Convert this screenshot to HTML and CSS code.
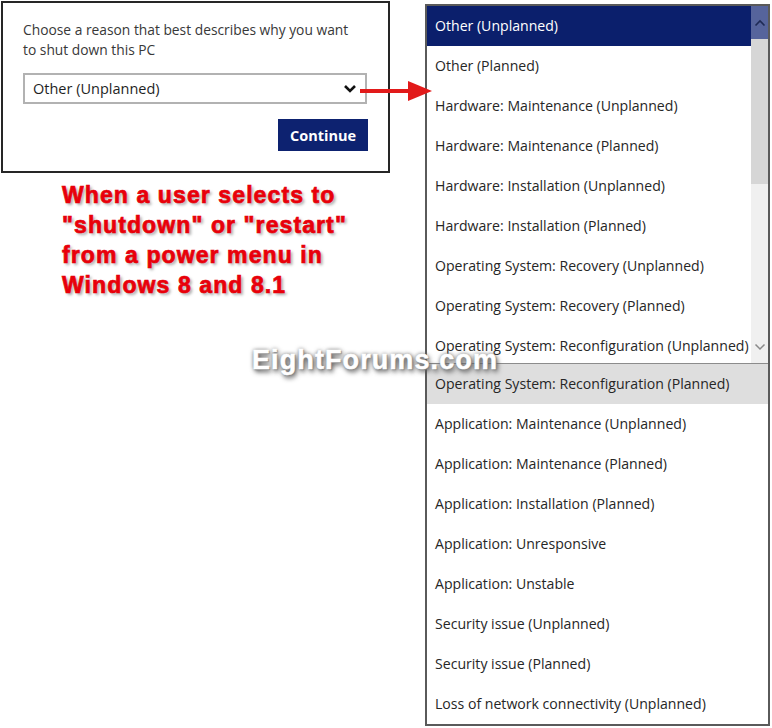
FILE: index.html
```html
<!DOCTYPE html>
<html>
<head>
<meta charset="utf-8">
<link rel="stylesheet" href="styles.css">
</head>
<body>
<div class="page">
  <div class="left">
    <div class="dialog">
      <p class="prompt">Choose a reason that best describes why you want to shut down this PC</p>
      <div class="select">
        <span>Other (Unplanned)</span>
        <svg class="chev" width="14" height="10" viewBox="0 0 14 10"><path d="M2 2 L7 7 L12 2" fill="none" stroke="#111" stroke-width="2.6"/></svg>
      </div>
      <div class="actions"><button class="btn">Continue</button></div>
    </div>
    <div class="note">When a user selects to<br>"shutdown" or "restart"<br>from a power menu in<br>Windows 8 and 8.1</div>
  </div>
  <div class="list">
    <div class="top">
      <div class="items">
        <div class="row sel">Other (Unplanned)</div>
        <div class="row">Other (Planned)</div>
        <div class="row">Hardware: Maintenance (Unplanned)</div>
        <div class="row">Hardware: Maintenance (Planned)</div>
        <div class="row">Hardware: Installation (Unplanned)</div>
        <div class="row">Hardware: Installation (Planned)</div>
        <div class="row">Operating System: Recovery (Unplanned)</div>
        <div class="row">Operating System: Recovery (Planned)</div>
        <div class="row">Operating System: Reconfiguration (Unplanned)</div>
      </div>
      <div class="scroll">
        <div class="sb-up"><svg width="12" height="8" viewBox="0 0 12 8"><path d="M1.5 6.5 L6 2 L10.5 6.5" fill="none" stroke="#1e2a55" stroke-width="1.6"/></svg></div>
        <div class="sb-thumb"></div>
        <div class="sb-track"><svg width="12" height="8" viewBox="0 0 12 8"><path d="M1.5 1.5 L6 6 L10.5 1.5" fill="none" stroke="#8a8a8a" stroke-width="1.5"/></svg></div>
      </div>
    </div>
    <div class="bottom">
      <div class="row hov">Operating System: Reconfiguration (Planned)</div>
      <div class="row">Application: Maintenance (Unplanned)</div>
      <div class="row">Application: Maintenance (Planned)</div>
      <div class="row">Application: Installation (Planned)</div>
      <div class="row">Application: Unresponsive</div>
      <div class="row">Application: Unstable</div>
      <div class="row">Security issue (Unplanned)</div>
      <div class="row">Security issue (Planned)</div>
      <div class="row">Loss of network connectivity (Unplanned)</div>
    </div>
  </div>
</div>
<svg class="arrow" width="80" height="26" viewBox="0 0 80 26"><g fill="#e21a1a"><rect x="2" y="9" width="52" height="4"/><polygon points="50,1 74,11 50,21"/></g></svg>
<div class="watermark">EightForums.com</div>
</body>
</html>
```

FILE: styles.css
```css
html, body {
  margin: 0;
  padding: 0;
  background: #fff;
}
body {
  width: 772px;
  height: 728px;
  overflow: hidden;
  position: relative;
  font-family: "Open Sans", "Noto Sans", sans-serif;
}
.page {
  display: flex;
  padding: 1px 0 0 1px;
}
.left {
  width: 389px;
  flex: none;
}
.dialog {
  box-sizing: border-box;
  width: 389px;
  height: 172px;
  border: 2px solid #262626;
  padding: 17px 20px 0 20px;
}
.prompt {
  margin: 0;
  font-size: 13.8px;
  line-height: 20px;
  color: #383838;
  width: 340px;
}
.select {
  box-sizing: border-box;
  margin-top: 13px;
  width: 344px;
  height: 31px;
  border: 2px solid #b2b2b2;
  display: flex;
  align-items: center;
  justify-content: space-between;
  padding: 0 8px 0 8px;
  font-size: 14.5px;
  color: #1f1f1f;
}
.chev { display: block; }
.actions {
  width: 345px;
  display: flex;
  justify-content: flex-end;
  margin-top: 15px;
}
.btn {
  width: 90px;
  height: 32px;
  border: 0;
  background: #0d2270;
  color: #fff;
  font-family: "Open Sans", "Noto Sans", sans-serif;
  font-weight: 700;
  font-size: 14.5px;
  padding: 0;
}
.note {
  margin-top: 7px;
  padding-left: 61px;
  font-family: "Liberation Sans", Arial, sans-serif;
  font-weight: 700;
  font-size: 23px;
  line-height: 30px;
  letter-spacing: 1.1px;
  color: #e8000a;
  -webkit-text-stroke: 0.7px #e8000a;
  text-shadow: 2px 2px 3px rgba(0,0,0,0.35);
  white-space: nowrap;
}
.list {
  margin-left: 35px;
  margin-top: 3px;
  width: 345px;
  height: 722px;
  box-sizing: border-box;
  border: 2px solid #5a5a5a;
  display: flex;
  flex-direction: column;
}
.top {
  height: 357px;
  display: flex;
  overflow: hidden;
  border-bottom: 1px solid #8c8c8c;
}
.items {
  width: 324px;
  flex: none;
}
.row {
  height: 40px;
  line-height: 40px;
  padding-left: 8px;
  font-size: 14.1px;
  color: #262626;
  white-space: nowrap;
}
.row.sel {
  background: #0b1f6c;
  color: #fff;
}
.row.hov {
  background: #dedede;
}
.scroll {
  width: 17px;
  flex: none;
  display: flex;
  flex-direction: column;
}
.sb-up {
  height: 33px;
  background: #56649c;
  display: flex;
  align-items: center;
  justify-content: center;
}
.sb-thumb {
  height: 145px;
  background: #d6d6d6;
}
.sb-track {
  flex: 1;
  background: #f0f0f0;
  display: flex;
  align-items: flex-end;
  justify-content: center;
  padding-bottom: 12px;
}
.sb-track svg { display: block; }
.bottom {
  flex: 1;
}
.arrow {
  position: absolute;
  left: 358px;
  top: 80px;
}
.watermark {
  position: absolute;
  left: 252px;
  top: 345px;
  font-family: "Liberation Sans", Arial, sans-serif;
  font-weight: 700;
  font-size: 27px;
  letter-spacing: 1.1px;
  color: #fff;
  -webkit-text-stroke: 0.5px #fff;
  text-shadow: 1px 1px 1px #888, 2px 3px 5px #555, 0 0 4px #777;
}
```
